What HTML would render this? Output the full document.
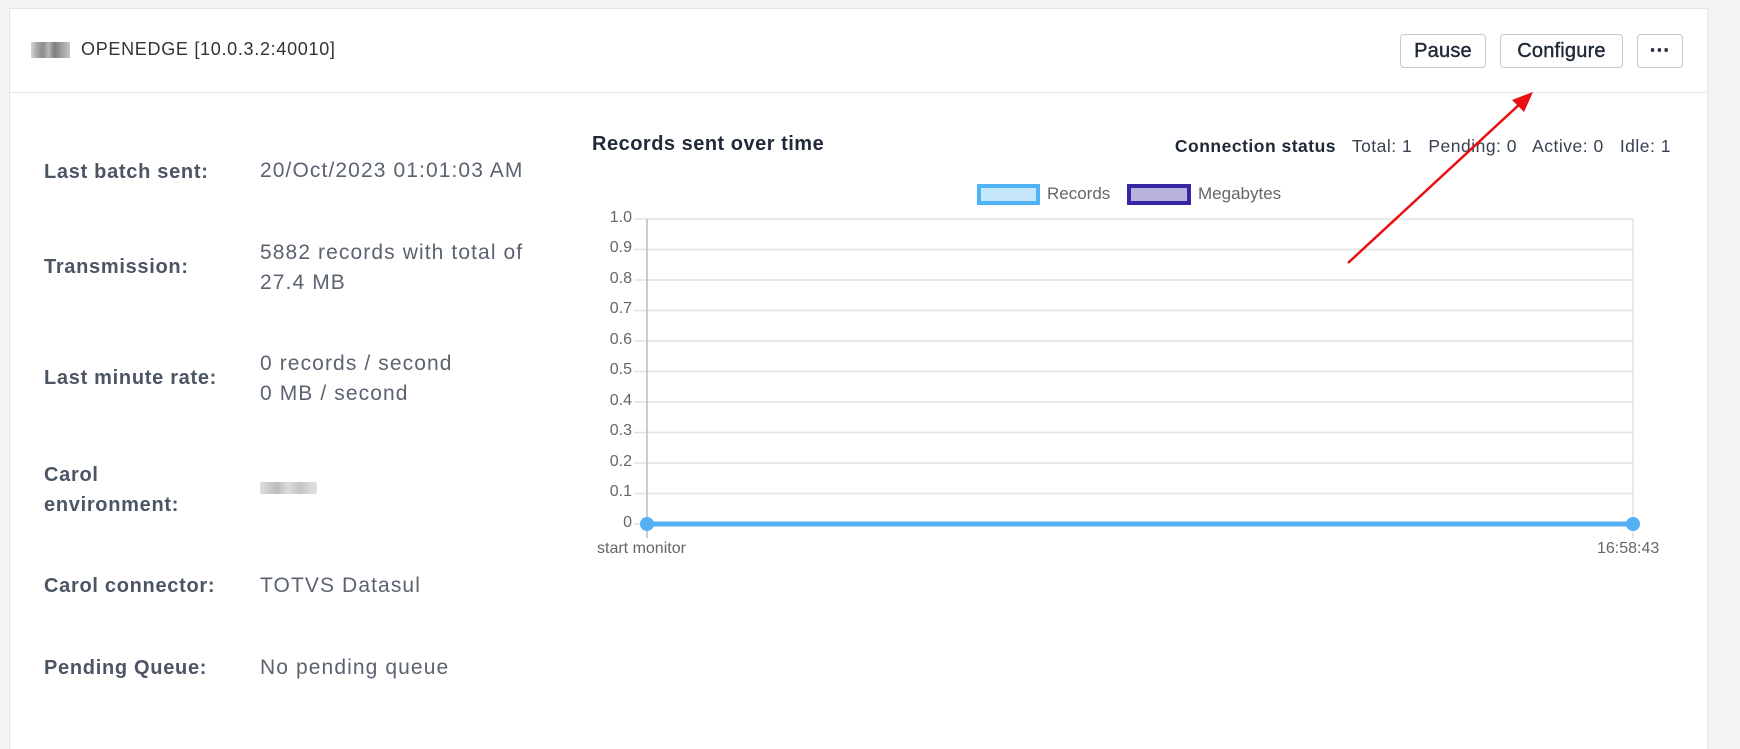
<!DOCTYPE html>
<html><head><meta charset="utf-8"><style>
body{margin:0;width:1740px;height:743px;background:#f3f4f6;font-family:"Liberation Sans",sans-serif;position:relative;overflow:hidden}
.card{position:absolute;left:9px;top:8px;width:1697px;height:740px;background:#fff;border:1px solid #e3e5e8;border-bottom:none;overflow:hidden}
.hdr{position:absolute;left:0;top:0;width:100%;height:83px;border-bottom:1px solid #e3e5e8}
.a{position:absolute;white-space:nowrap}
.btn{position:absolute;top:25px;height:34px;border:1px solid #c4c9d0;border-radius:4px;font-size:20px;color:#1f2937;display:flex;align-items:center;justify-content:center;box-sizing:border-box;letter-spacing:.2px;-webkit-text-stroke:.4px #1f2937}
.lbl{position:absolute;left:34px;font-size:20px;font-weight:bold;color:#4b5563;line-height:30px;letter-spacing:.7px}
.val{position:absolute;left:250px;font-size:21px;color:#5b6370;line-height:30px;letter-spacing:1.1px}
.yl{position:absolute;width:40px;text-align:right;left:592px;font-size:16px;color:#666}
</style></head><body>
<div class="card">
<div class="hdr">
 <div class="a" style="left:21px;top:33px;width:39px;height:16px;background:linear-gradient(90deg,#ccc 0,#999 15%,#777 30%,#aaa 45%,#666 60%,#888 75%,#bbb);opacity:.85"></div>
 <div class="a" style="left:71px;top:30px;font-size:18px;color:#333;letter-spacing:.7px">OPENEDGE [10.0.3.2:40010]</div>
 <div class="btn" style="left:1390px;width:86px">Pause</div>
 <div class="btn" style="left:1490px;width:123px">Configure</div>
 <div class="btn" style="left:1627px;width:46px;font-weight:bold">···</div>
</div>
<div class="lbl" style="top:148px">Last batch sent:</div>
<div class="val" style="top:147px">20/Oct/2023 01:01:03 AM</div>
<div class="lbl" style="top:243px">Transmission:</div>
<div class="val" style="top:229px">5882 records with total of<br>27.4 MB</div>
<div class="lbl" style="top:354px">Last minute rate:</div>
<div class="val" style="top:340px">0 records / second<br>0 MB / second</div>
<div class="lbl" style="top:451px">Carol<br>environment:</div>
<div class="a" style="left:250px;top:473px;width:57px;height:12px;background:linear-gradient(90deg,#ddd,#bbb 30%,#ddd 50%,#c4c4c4 70%,#e4e4e4)"></div>
<div class="lbl" style="top:562px">Carol connector:</div>
<div class="val" style="top:562px">TOTVS Datasul</div>
<div class="lbl" style="top:644px">Pending Queue:</div>
<div class="val" style="top:644px">No pending queue</div>
<div class="a" style="left:582px;top:124px;font-size:20px;font-weight:bold;color:#1f2937;letter-spacing:.5px">Records sent over time</div>
<div class="a" style="right:36px;top:127px;font-size:17.5px;color:#374151;letter-spacing:.5px"><b style="color:#1f2937">Connection status</b>&nbsp;&nbsp; Total: 1 &nbsp; Pending: 0 &nbsp; Active: 0 &nbsp; Idle: 1</div>
</div>
<div class="a" style="left:977px;top:184px;width:63px;height:21px;box-sizing:border-box;border:4px solid #4fb3f5;background:#c6e6fb"></div>
<div class="a" style="left:1047px;top:184px;font-size:17px;color:#666">Records</div>
<div class="a" style="left:1127px;top:184px;width:64px;height:21px;box-sizing:border-box;border:4px solid #3527a4;background:#b8b3de"></div>
<div class="a" style="left:1198px;top:184px;font-size:17px;color:#666">Megabytes</div>
<svg class="a" style="left:0;top:0" width="1740" height="743">
<g stroke="#e2e2e2" stroke-width="1.5">
<line x1="634" y1="219" x2="1633" y2="219"/><line x1="634" y1="249.5" x2="1633" y2="249.5"/><line x1="634" y1="280" x2="1633" y2="280"/><line x1="634" y1="310.5" x2="1633" y2="310.5"/><line x1="634" y1="341" x2="1633" y2="341"/><line x1="634" y1="371.5" x2="1633" y2="371.5"/><line x1="634" y1="402" x2="1633" y2="402"/><line x1="634" y1="432.5" x2="1633" y2="432.5"/><line x1="634" y1="463" x2="1633" y2="463"/><line x1="634" y1="493.5" x2="1633" y2="493.5"/><line x1="634" y1="524" x2="1633" y2="524"/>
<line x1="1633" y1="219" x2="1633" y2="538"/>
</g>
<line x1="647" y1="219" x2="647" y2="538" stroke="#bbb" stroke-width="1.5"/>
<line x1="647" y1="524" x2="1633" y2="524" stroke="#55b0f3" stroke-width="5"/>
<circle cx="647" cy="524" r="7" fill="#55b0f3"/><circle cx="1633" cy="524" r="7" fill="#55b0f3"/>
<line x1="1348" y1="263" x2="1522" y2="102" stroke="#e81010" stroke-width="2.5"/>
<polygon points="1533,92 1512,100 1524,112" fill="#e81010"/>
</svg>
<div class="yl" style="top:209px">1.0</div><div class="yl" style="top:239px">0.9</div><div class="yl" style="top:270px">0.8</div><div class="yl" style="top:300px">0.7</div><div class="yl" style="top:331px">0.6</div><div class="yl" style="top:361px">0.5</div><div class="yl" style="top:392px">0.4</div><div class="yl" style="top:422px">0.3</div><div class="yl" style="top:453px">0.2</div><div class="yl" style="top:483px">0.1</div><div class="yl" style="top:514px">0</div>
<div class="a" style="left:597px;top:540px;font-size:16px;color:#666">start monitor</div>
<div class="a" style="left:1597px;top:540px;font-size:16px;color:#666">16:58:43</div>
</body></html>
